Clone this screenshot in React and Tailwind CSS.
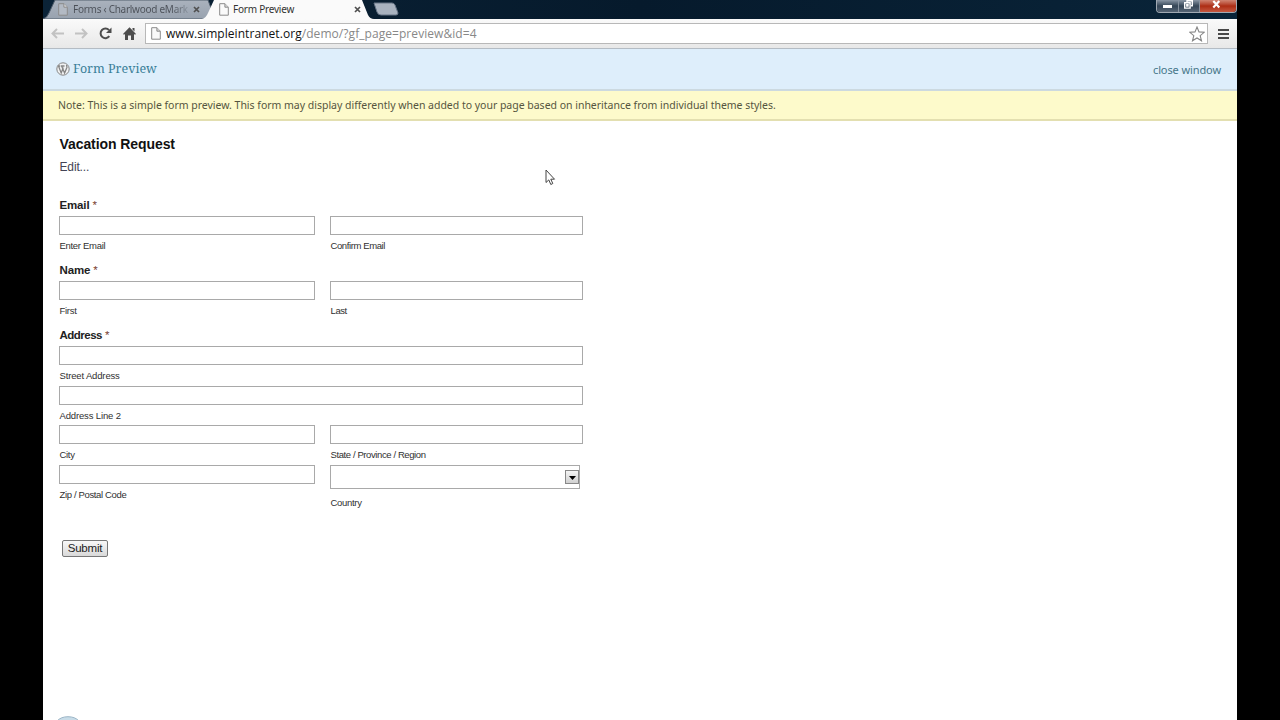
import React from "react";

const PageIcon = ({ className, fill = "#fafafa" }) => (
  <svg className={className} width="10" height="13" viewBox="0 0 10 13" fill={fill} stroke="#8b8b8b" strokeWidth="1">
    <path d="M.7.7h5.2l3.4 3.5v8H.7z" />
    <path d="M5.9.7v3.5h3.4" fill="#ddd" />
  </svg>
);

const CloseIcon = ({ className }) => (
  <svg className={className} width="7" height="7" viewBox="0 0 7 7" stroke="#505050" strokeWidth="1.7">
    <path d="M1 1l5 5M6 1L1 6" />
  </svg>
);

const Input = ({ w }) => <input type="text" className={"block h-[19px] border border-[#a9a9a9] bg-white outline-none " + w} />;

const Sub = ({ children, h = "h-[21px]", tracking = "tracking-[-0.3px]" }) => (
  <div className={"flex items-center whitespace-nowrap pl-[0.5px] pt-[2px] text-[9.5px] text-[#303030] " + h + " " + tracking}>{children}</div>
);

const Label = ({ children, tracking = "tracking-[-0.15px]" }) => (
  <div className={"flex h-[22px] items-center pl-[0.5px] pt-[2px] text-[11.5px] font-bold text-[#222] " + tracking}>
    {children}
    <span className="ml-[3px] font-normal text-[#7a4030]">*</span>
  </div>
);

const Pair = ({ left, right }) => (
  <div className="flex gap-[15px]">
    <div className="w-[256px]">
      <Input w="w-[256px]" />
      <Sub>{left}</Sub>
    </div>
    <div className="w-[253px]">
      <Input w="w-[253px]" />
      <Sub tracking="tracking-[-0.4px]">{right}</Sub>
    </div>
  </div>
);

function TabStrip() {
  return (
    <div className="relative h-[19px] shrink-0 bg-gradient-to-r from-[#0b2337] via-[#061a2c] to-[#092439]">
      <svg className="absolute left-0 top-0" width="400" height="19" viewBox="0 0 400 19">
        <defs>
          <linearGradient id="inactive" x2="0" y2="1">
            <stop stopColor="#aab2bd" />
            <stop offset="1" stopColor="#98a2af" />
          </linearGradient>
        </defs>
        <path d="M0 19Q4 18 6 13L12 0H165L172 19z" fill="url(#inactive)" stroke="#515e6c" />
        <path d="M159 19Q163 18 165 13L171 0H319L325 15Q327 19 331 19z" fill="#fafafa" />
        <path d="M331 3h18q2 0 3 2l3 8q0 2-2 2h-15q-3 0-4-3z" fill="#a8b2bf" stroke="#667486" />
      </svg>
      <div className="relative flex h-[18px] items-center font-['Noto_Sans',sans-serif] text-[10px] text-[#4b5058]">
        <PageIcon className="ml-[15px] shrink-0" fill="#b3bac4" />
        <span className="ml-[5px] w-[116px] whitespace-nowrap bg-gradient-to-r from-[#4b5058] from-85% to-[#8f98a4] bg-clip-text leading-[18px] tracking-[-0.27px] text-transparent">
          Forms ‹ Charlwood eMark
        </span>
        <CloseIcon className="ml-[4px] shrink-0" />
        <PageIcon className="ml-[19px] shrink-0" />
        <span className="ml-[4px] w-[114px] whitespace-nowrap leading-[18px] tracking-[-0.22px] text-[#333]">Form Preview</span>
        <CloseIcon className="ml-[7px] shrink-0" />
      </div>
      <div className="absolute right-0 top-0 flex h-[13px] w-[81px] overflow-hidden rounded-b-[4px] border border-t-0 border-[#a0a9b3]">
        <div className="flex w-[22px] items-center justify-center border-r border-[#8793a0] bg-gradient-to-b from-[#8a97a5] via-[#354657] to-[#566575]">
          <div className="mt-[1px] h-[3px] w-[9px] bg-white" />
        </div>
        <div className="flex w-[21px] items-start justify-center border-r border-[#8793a0] bg-gradient-to-b from-[#8a97a5] via-[#354657] to-[#566575]">
          <svg className="-ml-[2px]" width="9" height="9" viewBox="0 0 9 9" fill="none" stroke="#fff" strokeWidth="1.4">
            <path d="M3 2V.7h5.3v5H7M.7 2.7h5.4v5.4H.7zM2.8 4.8h1.2v1.2H2.8z" />
          </svg>
        </div>
        <div className="flex flex-1 items-start justify-center bg-gradient-to-b from-[#d08472] via-[#ad2c12] to-[#c5573f]">
          <svg className="-ml-[4px]" width="9" height="9" viewBox="0 0 9 9" stroke="#fff" strokeWidth="2.2">
            <path d="M1.3 1l6 6.500M7.300 1l-6 6.500" />
          </svg>
        </div>
      </div>
    </div>
  );
}

function Toolbar() {
  return (
    <div className="flex h-[30px] shrink-0 items-center border-b border-[#b4bcc4] bg-gradient-to-b from-[#fafafa] to-[#e8e8e8]">
      <svg className="ml-[8px]" width="13" height="11" viewBox="0 0 13 11" fill="none" stroke="#c2c2c2" strokeWidth="2">
        <path d="M6 1L1.500 5.500 6 10M2 5.500h11" />
      </svg>
      <svg className="ml-[11px]" width="13" height="11" viewBox="0 0 13 11" fill="none" stroke="#c2c2c2" strokeWidth="2">
        <path d="M7 1l4.500 4.500L7 10M11 5.500H0" />
      </svg>
      <svg className="ml-[11px]" width="13" height="13" viewBox="0 0 13 13" fill="none" stroke="#4d4d4d" strokeWidth="2">
        <path d="M10.300 9.200A4.800 4.800 0 1 1 10 3.200" />
        <path d="M12.500.5v5.500H7z" fill="#4d4d4d" stroke="none" />
      </svg>
      <svg className="ml-[11px]" width="13" height="13" viewBox="0 0 13 13" fill="#4d4d4d">
        <path d="M6.500.3L13 7l-1 .8-1-.9V13H8V8.500H5V13H2V6.900l-1 .9L0 7zM9.500 1h2v3.500l-2-2z" />
      </svg>
      <div className="ml-[9px] flex h-[21px] w-[1063px] items-center border border-[#b8b8b8] bg-white">
        <PageIcon className="ml-[5px]" />
        <span className="ml-[5px] whitespace-nowrap font-['Open_Sans',sans-serif] text-[12px] leading-[18px] tracking-[0.06px] text-[#888]">
          <span className="text-[#111]">www.simpleintranet.org</span>/demo/?gf_page=preview&amp;id=4
        </span>
        <svg className="ml-auto mr-[2px]" width="16" height="16" viewBox="0 0 16 16" fill="#fff" stroke="#858585" strokeWidth="1.1">
          <path d="M8 1l2 4.900 5.200.4-4 3.400 1.300 5.100L8 12l-4.500 2.800 1.300-5.100-4-3.400L6 5.900z" />
        </svg>
      </div>
      <div className="ml-[10px] flex flex-col gap-[2px]">
        <div className="h-[2px] w-[11px] bg-[#484848]" />
        <div className="h-[2px] w-[11px] bg-[#484848]" />
        <div className="h-[2px] w-[11px] bg-[#484848]" />
      </div>
    </div>
  );
}

function Banner() {
  return (
    <>
      <div className="flex h-[42px] shrink-0 items-center border-b-2 border-[#ccd9e0] bg-[#deeefb] px-[13px]">
        <svg width="14" height="14" viewBox="0 0 14 14" fill="none" stroke="#858585">
          <circle cx="7" cy="7" r="6.200" fill="#f1f2f3" />
          <path d="M2.500 4l2.700 7L7.300 5.500M5.600 4l3 7 2.300-5.600c.3-.8-.5-1.400-.3-2.400M1.800 4h2.500M5 4h3.500" strokeWidth="1.300" />
        </svg>
        <span className="ml-[3px] font-['Noto_Serif',Georgia,'DejaVu_Serif',serif] text-[12.5px] tracking-[0px] text-[#3a7f98]">Form Preview</span>
        <span className="ml-auto mr-[3px] pt-[2px] font-['Noto_Sans',sans-serif] text-[11px] tracking-[-0.1px] text-[#47778a]">close window</span>
      </div>
      <div className="flex h-[30px] shrink-0 items-center border-b-2 border-[#e3dfb0] bg-[#fdfacb] pl-[15px] pt-[1px] font-['Noto_Sans',sans-serif] text-[10.5px] tracking-[-0.015px] text-[#555540]">
        <span className="whitespace-nowrap">
          Note: This is a simple form preview. This form may display differently when added to your page based on inheritance from individual theme styles.
        </span>
      </div>
    </>
  );
}

export default function App() {
  return (
    <div className="flex h-[720px] w-[1280px] justify-center overflow-hidden bg-black">
      <div className="flex h-[720px] w-[1194px] flex-col overflow-hidden bg-white">
        <TabStrip />
        <Toolbar />
        <Banner />
        <form className="flex flex-1 flex-col pl-[16px] pt-[12px] font-['Liberation_Sans',Arial,sans-serif]">
          <h1 className="flex h-[22px] items-center pl-[0.5px] text-[14px] font-bold tracking-[-0.08px] text-[#111]">Vacation Request</h1>
          <p className="flex h-[24px] items-center pl-[0.5px] text-[12px] tracking-[-0.15px] text-[#445]">Edit...</p>
          <div className="mt-[15px]">
            <Label>Email</Label>
            <Pair left="Enter Email" right="Confirm Email" />
          </div>
          <div className="mt-[3px]">
            <Label>Name</Label>
            <Pair left="First" right="Last" />
          </div>
          <div className="mt-[3px]">
            <Label tracking="tracking-[-0.5px]">Address</Label>
            <Input w="w-[524px]" />
            <Sub tracking="tracking-[-0.15px]">Street Address</Sub>
            <Input w="w-[524px]" />
            <Sub h="h-[20px]" tracking="tracking-[-0.15px]">Address Line 2</Sub>
            <Pair left="City" right="State / Province / Region" />
            <div className="flex gap-[15px]">
              <div className="w-[256px]">
                <Input w="w-[256px]" />
                <Sub tracking="tracking-[-0.35px]">Zip / Postal Code</Sub>
              </div>
              <div>
                <div className="flex h-[24px] w-[250px] items-center justify-end border border-[#a9a9a9] bg-white">
                  <div className="flex h-[14px] w-[14px] items-center justify-center border border-[#888] bg-gradient-to-b from-[#f4f4f4] to-[#d0d0d0]">
                    <svg className="mt-[2px]" width="7" height="4" viewBox="0 0 7 4">
                      <path d="M0 0h7L3.500 4z" fill="#000" />
                    </svg>
                  </div>
                </div>
                <Sub h="h-[26px]">Country</Sub>
              </div>
            </div>
          </div>
          <button
            type="button"
            className="ml-[3px] mt-[25px] flex h-[17px] w-[46px] items-center justify-center rounded-[2px] border border-[#777] bg-gradient-to-b from-[#f8f8f8] to-[#d9d9d9] text-[11.5px] tracking-[-0.2px] text-[#222]"
          >
            Submit
          </button>
          <svg className="ml-[-3px] mt-auto" width="24" height="4" viewBox="0 0 24 4" fill="#c8dce8" stroke="#9cb5c6">
            <path d="M1 5Q5 .7 12 .7T23 5z" />
          </svg>
        </form>
      </div>
      <svg className="absolute left-[545px] top-[169px]" width="11" height="17" viewBox="0 0 11 17" fill="#fff" stroke="#444">
        <path d="M1 1v12.500l2.800-2.600 2 4.600 2-1-2-4.300h3.700z" />
      </svg>
    </div>
  );
}
